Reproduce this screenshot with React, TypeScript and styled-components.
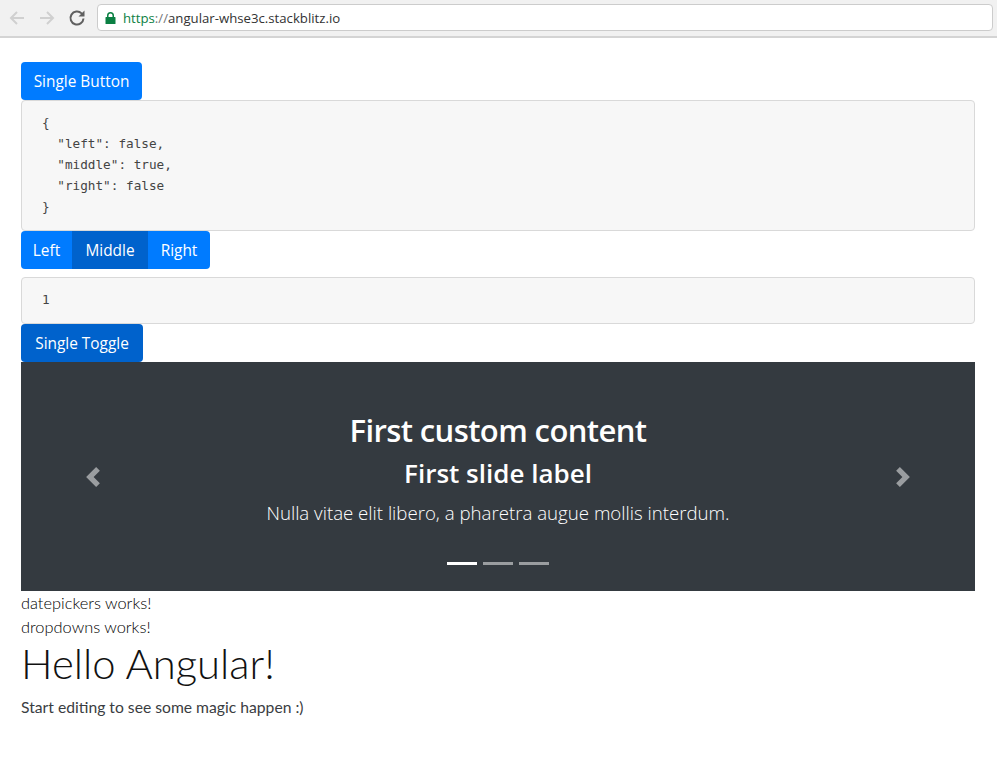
import styled, { createGlobalStyle } from 'styled-components';

const GlobalStyle = createGlobalStyle`
  html, body {
    margin: 0;
    padding: 0;
    background: #fff;
  }
  body {
    font-family: 'Lato', 'Liberation Sans', sans-serif;
    font-size: 16px;
    line-height: 24px;
    color: #212529;
  }
`;

const Toolbar = styled.div`
  display: flex;
  align-items: center;
  height: 38px;
  padding: 0 4px 1px 8px;
  box-sizing: border-box;
  background: #f1f1f1;
  border-bottom: 2px solid #d4d4d4;
`;

const NavIcon = styled.svg`
  display: block;
  width: 18px;
  height: 18px;
  margin-right: 12px;
  fill: none;
  stroke: ${p => p.color};
  stroke-width: 2;
`;

const AddressBar = styled.div`
  flex: 1;
  display: flex;
  align-items: center;
  gap: 7px;
  height: 27px;
  margin-left: -1px;
  padding-left: 7px;
  box-sizing: border-box;
  background: #fff;
  border: 1px solid #ccc;
  border-radius: 4px;
  font-family: 'Open Sans', sans-serif;
  font-size: 13.2px;
  color: #333;
`;

const Https = styled.span`
  color: #0b8043;
`;

const Slashes = styled.span`
  color: #777;
`;

const Main = styled.main`
  padding: 24px 22px 0 21px;
`;

const Button = styled.button<{ $active?: boolean; $width: number }>`
  display: block;
  width: ${p => p.$width}px;
  height: 38px;
  padding: 0;
  border: none;
  border-radius: 4px;
  background: ${p => (p.$active ? '#0062cc' : '#007bff')};
  color: #fff;
  font-family: 'Open Sans', sans-serif;
  font-size: 15.4px;
`;

const ButtonGroup = styled.div`
  display: flex;
  width: max-content;
  margin-bottom: 8px;
  border-radius: 4px;
  overflow: hidden;
`;

const GroupButton = styled(Button)`
  border-radius: 0;
`;

const Pre = styled.pre`
  margin: 0;
  padding: 11px 20px 13px;
  background: #f7f7f7;
  border: 1px solid #d9d9d9;
  border-radius: 4px;
  font-family: 'DejaVu Sans Mono', monospace;
  font-size: 12.7px;
  line-height: 21px;
  color: #444;
`;

const Carousel = styled.section`
  position: relative;
  height: 229px;
  padding-top: 48px;
  box-sizing: border-box;
  background: #343a40;
  color: #fff;
  font-family: 'Open Sans', sans-serif;
  text-align: center;
`;

const SlideTitle = styled.h2`
  margin: 0;
  font-size: 31px;
  font-weight: 600;
  line-height: 40px;
  letter-spacing: -0.6px;
`;

const SlideLabel = styled.h3`
  margin: 3px 0 0;
  font-size: 26px;
  font-weight: 600;
  line-height: 40px;
`;

const SlideText = styled.p`
  margin: 1px 0 0;
  font-size: 18.66px;
  font-weight: 300;
  line-height: 38px;
`;

const Control = styled.svg<{ $side: 'left' | 'right' }>`
  position: absolute;
  top: 105px;
  ${p => p.$side}: 62px;
  width: 20px;
  height: 20px;
  fill: #fff;
  opacity: 0.5;
`;

const Indicators = styled.div`
  position: absolute;
  left: 0;
  right: 0;
  bottom: 26px;
  display: flex;
  justify-content: center;
  gap: 6px;
`;

const Indicator = styled.span<{ $active?: boolean }>`
  width: 30px;
  height: 3px;
  background: #fff;
  opacity: ${p => (p.$active ? 1 : 0.5)};
`;

const Line = styled.div`
  font-size: 16.4px;
  font-weight: 300;
  color: #000;
`;

const Title = styled.h1`
  margin: 0 0 8px;
  font-size: 41.8px;
  font-weight: 300;
  line-height: 48px;
  color: #111;
`;

const Paragraph = styled.p`
  margin: 0;
  font-size: 15.7px;
  color: #3a3d42;
`;

const App = () => (
  <>
    <GlobalStyle />
    <Toolbar>
      <NavIcon viewBox="0 0 18 18" color="#d0d0d0">
        <path d="M16 9H3M9 3L3 9l6 6" />
      </NavIcon>
      <NavIcon viewBox="0 0 18 18" color="#d0d0d0">
        <path d="M2 9h13M9 3l6 6-6 6" />
      </NavIcon>
      <NavIcon viewBox="0 0 18 18" color="#5f5f5f">
        <path d="M15.5 9.5A6.5 6.5 0 1 1 13.6 4.4L15.5 6.3" />
        <path d="M16.5 1.5v6h-6" fill="#5f5f5f" stroke="none" />
      </NavIcon>
      <AddressBar>
        <svg width="11" height="12" viewBox="0 0 11 12">
          <path
            d="M1 5h1V3.5a3.5 3.5 0 0 1 7 0V5h1a.5.5 0 0 1 .5.5v6a.5.5 0 0 1-.5.5H1a.5.5 0 0 1-.5-.5v-6A.5.5 0 0 1 1 5zm2.5 0h4V3.5a2 2 0 0 0-4 0z"
            fill="#0b8043"
          />
        </svg>
        <span>
          <Https>https</Https>
          <Slashes>://</Slashes>angular-whse3c.stackblitz.io
        </span>
      </AddressBar>
    </Toolbar>
    <Main>
      <Button $width={121}>Single Button</Button>
      <Pre>{`{
  "left": false,
  "middle": true,
  "right": false
}`}</Pre>
      <ButtonGroup>
        <GroupButton $width={51}>Left</GroupButton>
        <GroupButton $width={76} $active>Middle</GroupButton>
        <GroupButton $width={62}>Right</GroupButton>
      </ButtonGroup>
      <Pre>1</Pre>
      <Button $width={122} $active>Single Toggle</Button>
      <Carousel>
        <SlideTitle>First custom content</SlideTitle>
        <SlideLabel>First slide label</SlideLabel>
        <SlideText>Nulla vitae elit libero, a pharetra augue mollis interdum.</SlideText>
        <Control $side="left" viewBox="0 0 8 8">
          <path d="M5.25 0l-4 4 4 4 1.5-1.5L4.25 4l2.5-2.5L5.25 0z" />
        </Control>
        <Control $side="right" viewBox="0 0 8 8">
          <path d="M2.75 0l-1.5 1.5L3.75 4l-2.5 2.5L2.75 8l4-4-4-4z" />
        </Control>
        <Indicators>
          <Indicator $active />
          <Indicator />
          <Indicator />
        </Indicators>
      </Carousel>
      <Line>datepickers works!</Line>
      <Line>dropdowns works!</Line>
      <Title>Hello Angular!</Title>
      <Paragraph>Start editing to see some magic happen :)</Paragraph>
    </Main>
  </>
);

export default App;
